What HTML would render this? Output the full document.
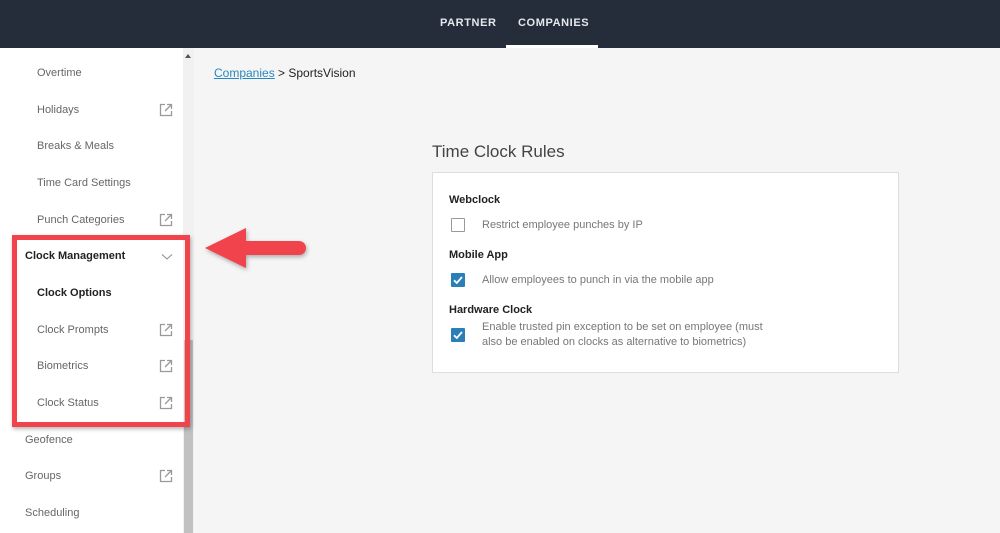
<!DOCTYPE html>
<html><head><meta charset="utf-8"><style>
*{margin:0;padding:0;box-sizing:border-box}
body{width:1000px;height:533px;overflow:hidden;background:#f5f5f5;font-family:"Liberation Sans",Arial,sans-serif;position:relative}
.hdr{position:absolute;left:0;top:0;width:1000px;height:48px;background:#252d3b}
.hdr span{position:absolute;top:17px;color:#e6e8ec;font-size:11px;font-weight:bold;letter-spacing:.6px}
.ul{position:absolute;left:506px;top:45px;width:92px;height:3px;background:#fff}
.side{position:absolute;left:0;top:48px;width:183px;height:485px;background:#fff}
.sb{position:absolute;left:183px;top:48px;width:11px;height:485px;background:#f1f1f1}
.thumb{position:absolute;left:184px;top:340px;width:9px;height:193px;background:#c1c1c1}
.it{position:absolute;font-size:11px;color:#666}
.sub{left:37px}.top{left:25px}
.ext{position:absolute;left:159px;width:14px;height:14px}
.box{position:absolute;left:12px;top:235px;width:178px;height:192px;border:5px solid #f0434b;box-shadow:1px 2px 4px rgba(0,0,0,.3)}
.main{position:absolute}
.card{position:absolute;left:432px;top:172px;width:467px;height:201px;background:#fff;border:1px solid #ddd}
.lbl{position:absolute;left:449px;font-size:11px;font-weight:bold;color:#222}
.txt{position:absolute;left:482px;font-size:11px;color:#777;line-height:15px}
.cb{position:absolute;left:451px;width:14px;height:14px;border-radius:1px}
.cb.off{border:1.5px solid #999;background:#fff}
.cb.on{background:#2a7fb8}
</style></head><body>
<div class="hdr"><span style="left:440px">PARTNER</span><span style="left:518px">COMPANIES</span><div class="ul"></div></div>
<div class="side"></div>
<div class="sb"></div><div class="thumb"></div>
<div style="position:absolute;left:185px;top:54px;width:0;height:0;border-left:3px solid transparent;border-right:3px solid transparent;border-bottom:4px solid #555"></div>

<div class="it sub" style="top:67px">Overtime</div>
<div class="it sub" style="top:104px">Holidays</div>
<div class="it sub" style="top:140px">Breaks &amp; Meals</div>
<div class="it sub" style="top:177px">Time Card Settings</div>
<div class="it sub" style="top:214px">Punch Categories</div>
<div class="it top" style="top:250px;color:#222;font-weight:bold">Clock Management</div>
<div class="it sub" style="top:287px;color:#222;font-weight:bold">Clock Options</div>
<div class="it sub" style="top:324px">Clock Prompts</div>
<div class="it sub" style="top:360px">Biometrics</div>
<div class="it sub" style="top:397px">Clock Status</div>
<div class="it top" style="top:434px">Geofence</div>
<div class="it top" style="top:470px">Groups</div>
<div class="it top" style="top:507px">Scheduling</div>

<svg width="0" height="0" style="position:absolute"><defs><g id="ex"><path d="M6 1.5H1.5V12.5H12.5V8" fill="none" stroke="#999" stroke-width="1.3"/><path d="M8 1.5H12.5V6M12.5 1.5L6 8" fill="none" stroke="#999" stroke-width="1.3"/></g></defs></svg>
<svg class="ext" style="top:103px"><use href="#ex"/></svg>
<svg class="ext" style="top:213px"><use href="#ex"/></svg>
<svg class="ext" style="top:323px"><use href="#ex"/></svg>
<svg class="ext" style="top:359px"><use href="#ex"/></svg>
<svg class="ext" style="top:396px"><use href="#ex"/></svg>
<svg class="ext" style="top:469px"><use href="#ex"/></svg>
<svg style="position:absolute;left:161px;top:253px" width="12" height="8"><path d="M1 1.5L6 6L11 1.5" fill="none" stroke="#888" stroke-width="1"/></svg>

<div class="box"></div>
<svg style="position:absolute;left:200px;top:224px" width="112" height="52"><path d="M5 24L46 4V17H99A7 7 0 0 1 99 31H46V44Z" fill="#f0434b" style="filter:drop-shadow(1px 2px 2px rgba(0,0,0,.3))"/></svg>

<div style="position:absolute;left:214px;top:66px;font-size:12px;color:#222"><span style="color:#2a86c0;text-decoration:underline">Companies</span> &gt; SportsVision</div>
<div style="position:absolute;left:432px;top:142px;font-size:17px;color:#444">Time Clock Rules</div>
<div class="card"></div>
<div class="lbl" style="top:194px">Webclock</div>
<div class="cb off" style="top:218px"></div>
<div class="txt" style="top:218px">Restrict employee punches by IP</div>
<div class="lbl" style="top:249px">Mobile App</div>
<div class="cb on" style="top:273px"><svg width="14" height="14"><path d="M3 7.3L5.8 10L11 4" fill="none" stroke="#fff" stroke-width="1.8"/></svg></div>
<div class="txt" style="top:273px">Allow employees to punch in via the mobile app</div>
<div class="lbl" style="top:304px">Hardware Clock</div>
<div class="cb on" style="top:328px"><svg width="14" height="14"><path d="M3 7.3L5.8 10L11 4" fill="none" stroke="#fff" stroke-width="1.8"/></svg></div>
<div class="txt" style="top:320px">Enable trusted pin exception to be set on employee (must<br>also be enabled on clocks as alternative to biometrics)</div>
</body></html>
